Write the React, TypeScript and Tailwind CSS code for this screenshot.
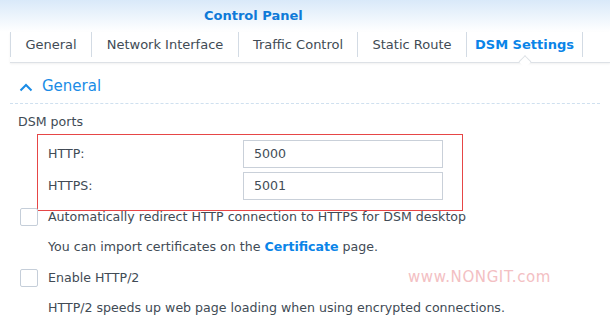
import React from "react";

const tabs = [
  { label: "General", w: "w-[81px]" },
  { label: "Network Interface", w: "w-[147px]" },
  { label: "Traffic Control", w: "w-[119px]" },
  { label: "Static Route", w: "w-[109px]" },
  { label: "DSM Settings", w: "w-[116px]", active: true },
];

function Checkbox() {
  return <span className="block h-[18px] w-[18px] shrink-0 rounded-[2px] border border-[#c5ced9] bg-white" />;
}

function PortRow({ label, value }: { label: string; value: string }) {
  return (
    <div className="flex h-[28px] items-center">
      <span className="w-[195px]">{label}</span>
      <div className="flex h-[28px] w-[200px] items-center border border-[#c9d0d9] px-[10px]">{value}</div>
    </div>
  );
}

export default function App() {
  return (
    <div
      className="relative h-[325px] w-[610px] overflow-hidden bg-white text-[12.6px] text-[#414b55]"
      style={{ fontFamily: "Verdana, 'DejaVu Sans', sans-serif" }}
    >
      {/* title bar */}
      <div className="flex h-[32px] items-center bg-gradient-to-b from-[#d9e9f9] to-white pl-[204px]">
        <span className="text-[13px] font-bold text-[#0f7ad8]">Control Panel</span>
      </div>

      {/* tabs */}
      <div className="relative ml-[10px] flex h-[31px] items-start border-b border-[#dde1e6] text-[13px] shadow-[0_1px_2px_rgba(0,0,0,0.06)]">
        {tabs.map((t) => (
          <div
            key={t.label}
            className={`relative flex h-[25px] items-center justify-center border-l border-[#d3dbe4] ${t.w} ${
              t.active ? "font-bold text-[#0a84e8]" : ""
            }`}
          >
            {t.label}
            {t.active && (
              <span className="absolute left-1/2 top-[25px] h-[9px] w-[9px] -translate-x-1/2 rotate-45 border-l border-t border-[#dde1e6] bg-white" />
            )}
          </div>
        ))}
        <div className="h-[25px] border-l border-[#d3dbe4]" />
      </div>

      {/* section header */}
      <div className="mx-[10px] mt-[12px] flex h-[29px] items-start border-b border-dashed border-[#cfe0ef]">
        <svg width="14" height="9" viewBox="0 0 14 9" className="ml-[9px] mt-[8px]">
          <path d="M1.5 7.5 L7 2 L12.5 7.5" fill="none" stroke="#1a8ce6" strokeWidth="2" />
        </svg>
        <span className="ml-[9px] text-[15px] leading-[22px] text-[#1a8ce6]">General</span>
      </div>

      <div className="px-[18px] leading-[16px]">
        <div className="mt-[10px]">DSM ports</div>

        <div className="ml-[19px] mt-[4px] flex w-[426px] flex-col gap-[4px] border border-[#e64646] pb-[10px] pl-[10px] pt-[5px]">
          <PortRow label="HTTP:" value="5000" />
          <PortRow label="HTTPS:" value="5001" />
        </div>

        <div className="-mt-[3px] flex items-center gap-[10px] pl-[2px]">
          <Checkbox />
          <span>Automatically redirect HTTP connection to HTTPS for DSM desktop</span>
        </div>
        <div className="mt-[13px] pl-[30px]">
          You can import certificates on the <span className="font-bold text-[#0a84e8]">Certificate</span> page.
        </div>

        <div className="mt-[14px] flex items-center gap-[10px] pl-[2px]">
          <Checkbox />
          <span>Enable HTTP/2</span>
        </div>
        <div className="mt-[13px] pl-[30px]">HTTP/2 speeds up web page loading when using encrypted connections.</div>
      </div>

      {/* watermark */}
      <div
        className="absolute left-[408px] top-[266px] text-[15px] tracking-[0.6px] text-[#f3c0c3]"
        style={{ fontFamily: "'DejaVu Sans', sans-serif" }}
      >
        www.NONGIT.com
      </div>
    </div>
  );
}
